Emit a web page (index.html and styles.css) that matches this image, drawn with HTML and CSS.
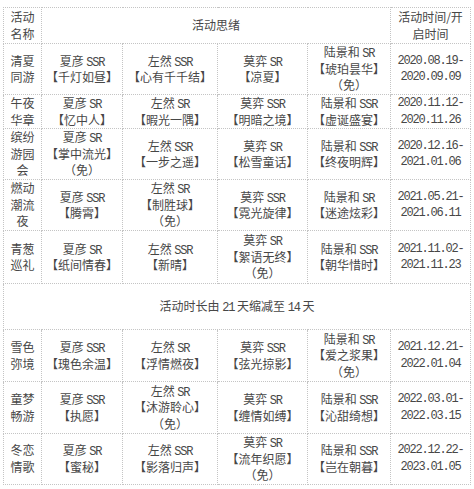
FILE: index.html
```html
<!DOCTYPE html>
<html lang="zh-CN">
<head>
<meta charset="utf-8">
<title>活动思绪</title>
<link rel="stylesheet" href="styles.css">
</head>
<body>
<div class="wrap">
<table class="events">
  <colgroup>
    <col class="c-name"><col class="c-a"><col class="c-b"><col class="c-c"><col class="c-d"><col class="c-time">
  </colgroup>
  <tr class="head">
    <td class="name">活动名称</td>
    <td colspan="4">活动思绪</td>
    <td class="time">活动时间/开启时间</td>
  </tr>
  <tr class="tall">
    <td class="name">清夏同游</td>
    <td>夏彦 <span class="r">SSR</span><br>【千灯如昼】</td>
    <td>左然 <span class="r">SSR</span><br>【心有千千结】</td>
    <td>莫弈 <span class="r">SR</span><br>【凉夏】</td>
    <td>陆景和 <span class="r">SR</span><br>【琥珀昙华】<br>（免）</td>
    <td class="date">2020.08.19-<br>2020.09.09</td>
  </tr>
  <tr>
    <td class="name">午夜华章</td>
    <td>夏彦 <span class="r">SR</span><br>【忆中人】</td>
    <td>左然 <span class="r">SR</span><br>【暇光一隅】</td>
    <td>莫弈 <span class="r">SSR</span><br>【明暗之境】</td>
    <td>陆景和 <span class="r">SSR</span><br>【虚诞盛宴】</td>
    <td class="date">2020.11.12-<br>2020.11.26</td>
  </tr>
  <tr class="tall">
    <td class="name">缤纷游园会</td>
    <td>夏彦 <span class="r">SR</span><br>【掌中流光】<br>（免）</td>
    <td>左然 <span class="r">SSR</span><br>【一步之遥】</td>
    <td>莫弈 <span class="r">SR</span><br>【松雪童话】</td>
    <td>陆景和 <span class="r">SSR</span><br>【终夜明辉】</td>
    <td class="date">2020.12.16-<br>2021.01.06</td>
  </tr>
  <tr class="tall">
    <td class="name">燃动潮流夜</td>
    <td>夏彦 <span class="r">SSR</span><br>【腾霄】</td>
    <td>左然 <span class="r">SR</span><br>【制胜球】<br>（免）</td>
    <td>莫弈 <span class="r">SSR</span><br>【霓光旋律】</td>
    <td>陆景和 <span class="r">SR</span><br>【迷途炫彩】</td>
    <td class="date">2021.05.21-<br>2021.06.11</td>
  </tr>
  <tr class="tall5">
    <td class="name">青葱巡礼</td>
    <td>夏彦 <span class="r">SR</span><br>【纸间情春】</td>
    <td>左然 <span class="r">SSR</span><br>【新晴】</td>
    <td>莫弈 <span class="r">SR</span><br>【絮语无终】<br>（免）</td>
    <td>陆景和 <span class="r">SSR</span><br>【朝华惜时】</td>
    <td class="date">2021.11.02-<br>2021.11.23</td>
  </tr>
  <tr class="note">
    <td colspan="6">活动时长由 <span class="r">21</span> 天缩减至 <span class="r">14</span> 天</td>
  </tr>
  <tr class="lower">
    <td class="name">雪色弥境</td>
    <td>夏彦 <span class="r">SSR</span><br>【瑰色余温】</td>
    <td>左然 <span class="r">SR</span><br>【浮情燃夜】</td>
    <td>莫弈 <span class="r">SSR</span><br>【弦光掠影】</td>
    <td>陆景和 <span class="r">SR</span><br>【爱之浆果】<br>（免）</td>
    <td class="date">2021.12.21-<br>2022.01.04</td>
  </tr>
  <tr class="lower">
    <td class="name">童梦畅游</td>
    <td>夏彦 <span class="r">SSR</span><br>【执愿】</td>
    <td>左然 <span class="r">SR</span><br>【沐游聆心】<br>（免）</td>
    <td>莫弈 <span class="r">SR</span><br>【缠情如缚】</td>
    <td>陆景和 <span class="r">SSR</span><br>【沁甜绮想】</td>
    <td class="date">2022.03.01-<br>2022.03.15</td>
  </tr>
  <tr class="last">
    <td class="name">冬恋情歌</td>
    <td>夏彦 <span class="r">SR</span><br>【蜜秘】</td>
    <td>左然 <span class="r">SSR</span><br>【影落归声】</td>
    <td>莫弈 <span class="r">SR</span><br>【流年织愿】<br>（免）</td>
    <td>陆景和 <span class="r">SSR</span><br>【岂在朝暮】</td>
    <td class="date">2022.12.22-<br>2023.01.05</td>
  </tr>
</table>
</div>
</body>
</html>
```
FILE: styles.css
```css
html, body {
  margin: 0;
  padding: 0;
  background: #ffffff;
}

.wrap {
  padding: 7px 4px 0 3px;
}

.events {
  width: 467px;
  table-layout: fixed;
  border-collapse: collapse;
  font-family: "Noto Sans CJK SC", sans-serif;
  font-size: 12px;
  line-height: 16.5px;
  color: #474747;
  border: 1px dotted #c4c4c4;
}

.c-name { width: 38px; }
.c-a { width: 81px; }
.c-b { width: 95px; }
.c-c { width: 90px; }
.c-d { width: 83px; }
.c-time { width: 80px; }

.events td {
  border: 1px dotted #c4c4c4;
  padding: 0 1px;
  text-align: center;
  vertical-align: middle;
}

.events td.name {
  padding: 0 6px;
}

.events td.time {
  padding: 0 4px;
}

.r {
  font-family: "Liberation Mono", monospace;
  letter-spacing: -1.2px;
  line-height: 10px;
}

.head td {
  height: 35px;
}

.tall td {
  height: 50px;
}

.tall5 td {
  height: 52px;
}

.lower td {
  height: 51px;
}

.last td {
  height: 49px;
}

.note td {
  height: 45px;
}

.date {
  font-family: "Liberation Mono", monospace;
  letter-spacing: -1.2px;
}
```
